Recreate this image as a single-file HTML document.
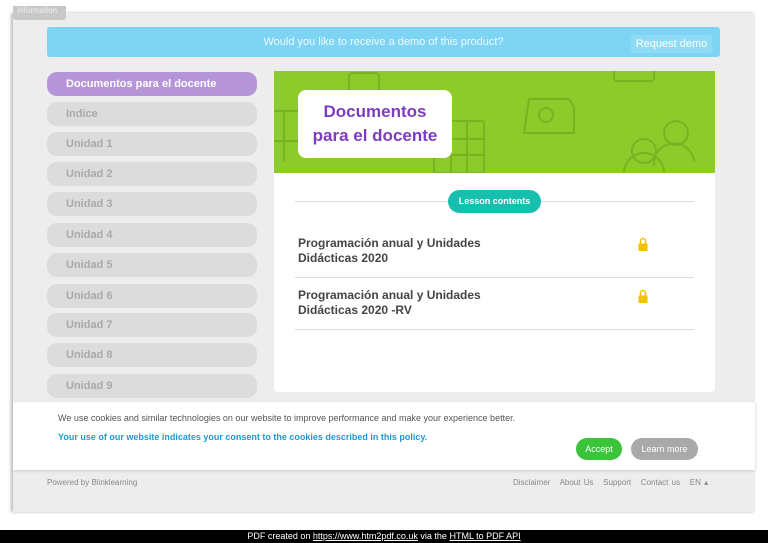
<!DOCTYPE html>
<html><head><meta charset="utf-8"><style>
*{margin:0;padding:0;box-sizing:border-box}
body{width:768px;height:543px;background:#fff;font-family:"Liberation Sans",sans-serif;position:relative;overflow:hidden}
.panel{position:absolute;left:13px;top:13px;width:742px;height:499px;background:#ededed;box-shadow:-2px 0 3px #bbb}
.tag{position:absolute;left:13px;top:6px;width:53px;height:14px;background:#c8c8c8;border-radius:0 0 3px 3px;color:#eee;font-size:8px;padding-left:4px;line-height:10px}
.banner{position:absolute;left:47px;top:27px;width:673px;height:30px;background:#7dd5f3;border-radius:3px;color:#eef9ff;font-size:11px;text-align:center;line-height:30px}
.rd{position:absolute;right:8px;top:8px;height:18px;width:81px;background:#8ddbf5;line-height:18px;font-size:11px;color:#fff;border-radius:2px}
.side{position:absolute;left:47px;width:210px;height:24px;border-radius:10px;background:#dcdcdc;color:#a9a9a9;font-size:11px;font-weight:bold;padding-left:19px;line-height:24px}
.side.a{background:#b595d7;color:#fff}
.card{position:absolute;left:274px;top:71px;width:441px;height:321px;background:#fff;border-radius:0 0 4px 4px}
.hero{position:absolute;left:0;top:0;width:441px;height:102px;background:#8ccb29;overflow:hidden}
.tb{position:absolute;left:24px;top:19px;width:154px;height:68px;background:#fff;border-radius:8px;color:#7d3cbf;font-weight:bold;font-size:17px;text-align:center;line-height:24px;padding-top:10px}
.line{position:absolute;left:21px;width:399px;height:1px;background:#ddd}
.pill{position:absolute;left:174px;top:119px;width:93px;height:23px;background:#17bfae;border-radius:12px;color:#fff;font-size:9px;font-weight:bold;text-align:center;line-height:23px}
.it{position:absolute;left:24px;font-size:12px;font-weight:bold;color:#444;line-height:15px}
.lock{position:absolute;left:364px;width:10px;height:14px}
.cookie{position:absolute;left:13px;top:402px;width:742px;height:68px;background:#fff;box-shadow:0 1px 3px #ccc}
.c1{position:absolute;left:45px;top:11px;font-size:9px;color:#555}
.c2{position:absolute;left:45px;top:30px;font-size:9px;color:#1d9ad6;font-weight:bold}
.btn{position:absolute;top:36px;height:22px;border-radius:11px;color:#fff;font-size:9px;text-align:center;line-height:22px}
.foot{position:absolute;top:478px;font-size:8px;color:#888}
.pdf{position:absolute;left:0;top:530px;width:768px;height:13px;background:#000;color:#fff;font-size:9px;text-align:center;line-height:13px}
.pdf u{text-decoration:underline}
</style></head><body>
<div class="panel"></div>
<div class="tag">Information</div>
<div class="banner">Would you like to receive a demo of this product?<div class="rd">Request demo</div></div>
<div class="side a" style="top:72px">Documentos para el docente</div>
<div class="side" style="top:102px">Indice</div>
<div class="side" style="top:132px">Unidad 1</div>
<div class="side" style="top:162px">Unidad 2</div>
<div class="side" style="top:192px">Unidad 3</div>
<div class="side" style="top:223px">Unidad 4</div>
<div class="side" style="top:253px">Unidad 5</div>
<div class="side" style="top:284px">Unidad 6</div>
<div class="side" style="top:313px">Unidad 7</div>
<div class="side" style="top:343px">Unidad 8</div>
<div class="side" style="top:374px">Unidad 9</div>
<div class="card">
<div class="hero">
<svg width="441" height="102" style="position:absolute;left:0;top:0" fill="none" stroke="#78b321" stroke-width="2">
<rect x="75" y="2" width="30" height="22" rx="4"/>
<rect x="160" y="50" width="50" height="52" rx="2"/>
<path d="M160 68h50M160 84h50M177 50v52M193 50v52"/>
<path d="M255 28h40l5 8v26h-50z"/><circle cx="272" cy="44" r="7"/>
<circle cx="370" cy="80" r="12"/><circle cx="402" cy="62" r="12"/><path d="M350 102a20 20 0 0 1 40 0M380 95a20 20 0 0 1 40 -5"/>
<rect x="340" y="-8" width="40" height="18" rx="3"/>
<path d="M0 40h30M0 70h30M10 40v50"/>
</svg>
<div class="tb">Documentos<br>para el docente</div>
</div>
<div class="line" style="top:130px"></div>
<div class="pill">Lesson contents</div>
<div class="it" style="top:165px">Programación anual y Unidades<br>Didácticas 2020</div>
<svg class="lock" style="top:166px" viewBox="0 0 10 14"><path d="M2.5 7V4a2.5 2.5 0 0 1 5 0v3" stroke="#f2c200" stroke-width="1.5" fill="none"/><rect x="0.5" y="6.5" width="9" height="7.5" rx="1" fill="#f2c200"/></svg>
<div class="line" style="top:206px"></div>
<div class="it" style="top:217px">Programación anual y Unidades<br>Didácticas 2020 -RV</div>
<svg class="lock" style="top:218px" viewBox="0 0 10 14"><path d="M2.5 7V4a2.5 2.5 0 0 1 5 0v3" stroke="#f2c200" stroke-width="1.5" fill="none"/><rect x="0.5" y="6.5" width="9" height="7.5" rx="1" fill="#f2c200"/></svg>
<div class="line" style="top:258px"></div>
</div>
<div class="cookie">
<div class="c1">We use cookies and similar technologies on our website to improve performance and make your experience better.</div>
<div class="c2">Your use of our website indicates your consent to the cookies described in this policy.</div>
<div class="btn" style="left:563px;width:46px;background:#3ac43a">Accept</div>
<div class="btn" style="left:618px;width:67px;background:#a9a9a9">Learn more</div>
</div>
<div class="foot" style="left:47px">Powered by Blinklearning</div>
<div class="foot" style="left:513px;word-spacing:1px">Disclaimer &nbsp; About Us &nbsp; Support &nbsp; Contact us &nbsp; EN ▴</div>
<div class="pdf">PDF created on <u>https://www.htm2pdf.co.uk</u> via the <u>HTML to PDF API</u></div>
</body></html>
